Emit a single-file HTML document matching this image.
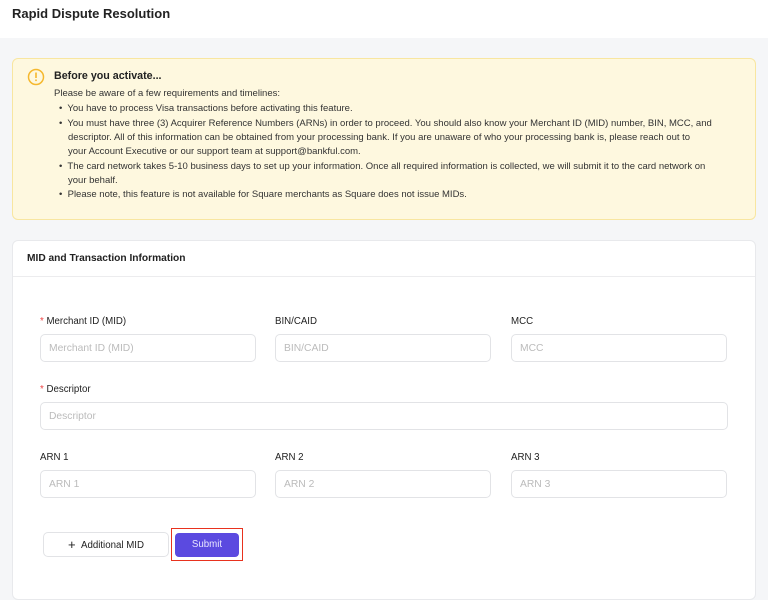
<!DOCTYPE html>
<html><head><style>
*{box-sizing:border-box;margin:0;padding:0}
body{width:768px;height:582px;background:#f5f6f8;font-family:"Liberation Sans",sans-serif;color:#222;position:relative;overflow:hidden}
.a{position:absolute}
.hdr{left:0;top:0;width:768px;height:38px;background:#fff}
.t{left:12px;top:6px;font-size:13px;font-weight:bold;color:#222}
.alert{left:12px;top:58px;width:744px;height:162px;background:#fef8df;border:1px solid #f8e6a0;border-radius:6px}
.fs{font-size:9.5px;color:#333;white-space:nowrap}
.card{left:12px;top:240px;width:744px;height:360px;background:#fff;border:1px solid #e8e9ec;border-radius:6px}
.inp{height:28px;border:1px solid #e2e3e6;border-radius:5px;background:#fff;font-size:10.3px;color:#bbb;padding:8px 0 0 8px}
.lbl{font-size:9.7px;color:#222}
</style></head><body>
<div class="a hdr"></div>
<div class="a t">Rapid Dispute Resolution</div>
<div class="a alert"></div>
<svg class="a" style="left:27px;top:68px" width="18" height="18" viewBox="0 0 18 18"><circle cx="9" cy="9" r="7.5" fill="none" stroke="#f5b82e" stroke-width="1.5"/><rect x="8.2" y="4.5" width="1.6" height="5.5" fill="#f5b82e"/><rect x="8.2" y="11.5" width="1.6" height="1.6" fill="#f5b82e"/></svg>
<div class="a" style="left:54px;top:70px;font-size:10.7px;font-weight:bold;color:#222">Before you activate...</div>
<div class="a fs" style="left:54px;top:88px">Please be aware of a few requirements and timelines:</div>
<div class="a fs" style="left:59px;top:103px">•&nbsp; You have to process Visa transactions before activating this feature.</div>
<div class="a fs" style="left:59px;top:118px">•&nbsp; You must have three (3) Acquirer Reference Numbers (ARNs) in order to proceed. You should also know your Merchant ID (MID) number, BIN, MCC, and</div>
<div class="a fs" style="left:68px;top:132px">descriptor. All of this information can be obtained from your processing bank. If you are unaware of who your processing bank is, please reach out to</div>
<div class="a fs" style="left:68px;top:146px">your Account Executive or our support team at support@bankful.com.</div>
<div class="a fs" style="left:59px;top:161px">•&nbsp; The card network takes 5-10 business days to set up your information. Once all required information is collected, we will submit it to the card network on</div>
<div class="a fs" style="left:68px;top:175px">your behalf.</div>
<div class="a fs" style="left:59px;top:189px">•&nbsp; Please note, this feature is not available for Square merchants as Square does not issue MIDs.</div>
<div class="a card"></div>
<div class="a" style="left:13px;top:276px;width:742px;height:1px;background:#ececee"></div>
<div class="a" style="left:27px;top:253px;font-size:10.2px;font-weight:bold;color:#222">MID and Transaction Information</div>
<div class="a lbl" style="left:40px;top:316px"><span style="color:#e44">*</span> Merchant ID (MID)</div>
<div class="a lbl" style="left:275px;top:316px">BIN/CAID</div>
<div class="a lbl" style="left:511px;top:316px">MCC</div>
<div class="a inp" style="left:40px;top:334px;width:216px">Merchant ID (MID)</div>
<div class="a inp" style="left:275px;top:334px;width:216px">BIN/CAID</div>
<div class="a inp" style="left:511px;top:334px;width:216px">MCC</div>
<div class="a lbl" style="left:40px;top:384px"><span style="color:#e44">*</span> Descriptor</div>
<div class="a inp" style="left:40px;top:402px;width:688px">Descriptor</div>
<div class="a lbl" style="left:40px;top:452px">ARN 1</div>
<div class="a lbl" style="left:275px;top:452px">ARN 2</div>
<div class="a lbl" style="left:511px;top:452px">ARN 3</div>
<div class="a inp" style="left:40px;top:470px;width:216px">ARN 1</div>
<div class="a inp" style="left:275px;top:470px;width:216px">ARN 2</div>
<div class="a inp" style="left:511px;top:470px;width:216px">ARN 3</div>
<div class="a" style="left:43px;top:532px;width:126px;height:25px;border:1px solid #e2e3e6;border-radius:5px;font-size:9.7px;text-align:center;line-height:23px;color:#222"><span style="font-size:13px;vertical-align:-1px">+</span>&nbsp;&nbsp;Additional MID</div>
<div class="a" style="left:171px;top:528px;width:72px;height:33px;border:1.5px solid #e8321e"></div>
<div class="a" style="left:175px;top:533px;width:64px;height:24px;background:#5b4ae0;border-radius:4px;color:#e8e6ff;font-size:9.7px;text-align:center;line-height:24px">Submit</div>
</body></html>
